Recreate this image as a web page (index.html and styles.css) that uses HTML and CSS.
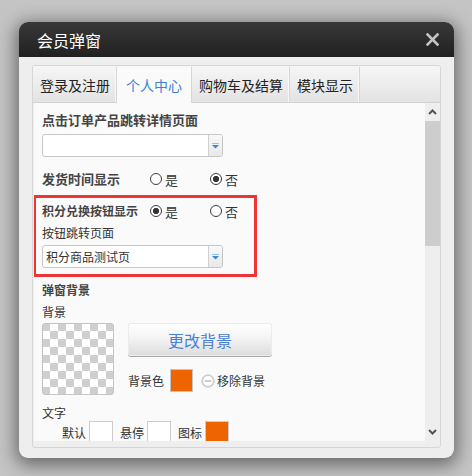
FILE: index.html
```html
<!DOCTYPE html>
<html lang="zh-CN">
<head>
<meta charset="utf-8">
<title>会员弹窗</title>
<link rel="stylesheet" href="styles.css">
</head>
<body>
<div class="dialog">
  <div class="dialog-head">
    <span class="dialog-title">会员弹窗</span>
    <span class="dialog-close">
      <svg width="13" height="13" viewBox="0 0 13 13"><path d="M1.5 1.5 L11.5 11.5 M11.5 1.5 L1.5 11.5" stroke="#c4c4c4" stroke-width="2.6" stroke-linecap="square"/></svg>
    </span>
  </div>
  <div class="dialog-body">
    <div class="tabs">
      <div class="tab-bar">
        <div class="tab">登录及注册</div>
        <div class="tab active">个人中心</div>
        <div class="tab">购物车及结算</div>
        <div class="tab">模块显示</div>
      </div>
      <div class="tab-panel">
        <div class="panel-scroll">
          <div class="label-strong">点击订单产品跳转详情页面</div>
          <div class="select">
            <span class="select-value"></span>
            <span class="select-arrow"><svg width="7" height="6" viewBox="0 0 7 6"><rect x="0" y="0" width="7" height="1" fill="#9cc0e6"/><path d="M0 2 H7 L3.5 5.5 Z" fill="#3f86d0"/></svg></span>
          </div>

          <div class="option-row">
            <span class="label-strong option-label">发货时间显示</span>
            <span class="radio"><i class="radio-dot"></i>是</span>
            <span class="radio"><i class="radio-dot checked"></i>否</span>
          </div>

          <div class="highlight">
            <div class="option-row first">
              <span class="label-strong option-label small">积分兑换按钮显示</span>
              <span class="radio"><i class="radio-dot checked"></i>是</span>
              <span class="radio"><i class="radio-dot"></i>否</span>
            </div>
            <div class="label tight">按钮跳转页面</div>
            <div class="select near">
              <span class="select-value">积分商品测试页</span>
              <span class="select-arrow"><svg width="7" height="6" viewBox="0 0 7 6"><rect x="0" y="0" width="7" height="1" fill="#9cc0e6"/><path d="M0 2 H7 L3.5 5.5 Z" fill="#3f86d0"/></svg></span>
            </div>
          </div>

          <div class="label-strong small section">弹窗背景</div>
          <div class="label tight">背景</div>
          <div class="bg-row">
            <div class="checker"></div>
            <div class="bg-controls">
              <button class="btn-change" type="button">更改背景</button>
              <div class="color-row">
                <span>背景色</span>
                <span class="swatch"></span>
                <span class="remove">
                  <svg width="14" height="14" viewBox="0 0 14 14"><circle cx="7" cy="7" r="5.8" fill="#fff" stroke="#cfcfcf" stroke-width="1.8"/><rect x="3.8" y="6" width="6.4" height="2" fill="#cfcfcf"/></svg>
                  <span>移除背景</span>
                </span>
              </div>
            </div>
          </div>

          <div class="label text-title">文字</div>
          <div class="text-row">
            <span>默认</span><span class="box"></span>
            <span>悬停</span><span class="box"></span>
            <span>图标</span><span class="box orange"></span>
          </div>
        </div>
        <div class="scrollbar">
          <div class="sb-btn"><svg width="9" height="6" viewBox="0 0 9 6"><path d="M1 5 L4.5 1.5 L8 5" fill="none" stroke="#555" stroke-width="2"/></svg></div>
          <div class="sb-track"><div class="sb-thumb"></div></div>
          <div class="sb-btn"><svg width="9" height="6" viewBox="0 0 9 6"><path d="M1 1 L4.5 4.5 L8 1" fill="none" stroke="#555" stroke-width="2"/></svg></div>
        </div>
      </div>
    </div>
  </div>
</div>
</body>
</html>
```

FILE: styles.css
```css
* { box-sizing: border-box; }

html, body { margin: 0; }

body {
  height: 476px;
  overflow: hidden;
  background: #c4c4c4;
  padding: 22px 0 0 19px;
  font-family: "Noto Sans CJK SC", "Noto Sans", sans-serif;
  color: #333;
}

/* dialog frame */
.dialog {
  width: 435px;
  height: 436px;
  border-radius: 9px;
  background: #eeeeee;
  box-shadow: 0 4px 18px 3px rgba(0, 0, 0, 0.48);
  display: flex;
  flex-direction: column;
  overflow: hidden;
}

.dialog-head {
  flex: none;
  height: 35px;
  background: linear-gradient(#383838, #212121);
  display: flex;
  align-items: center;
  justify-content: space-between;
  padding: 0 15px 0 18px;
}

.dialog-title {
  color: #fff;
  font-size: 16px;
  line-height: 20px;
}

.dialog-close svg { display: block; }

.dialog-body {
  flex: 1;
  display: flex;
  padding: 8px 13px 10px;
  min-height: 0;
}

/* tab box */
.tabs {
  flex: 1;
  display: flex;
  flex-direction: column;
  border: 1px solid #d6d6d6;
  border-radius: 3px;
  background: #eeeeee;
  min-height: 0;
}

.tab-bar {
  flex: none;
  display: flex;
  height: 37px;
  padding-top: 1px;
  border-bottom: 1px solid #d2d2d2;
  background: linear-gradient(#f6f6f6, #e3e3e3);
  border-radius: 2px 2px 0 0;
}

.tab {
  padding: 1px 6px 0 7px;
  line-height: 34px;
  font-size: 14px;
  color: #222;
  border-right: 1px solid #d6d6d6;
  box-shadow: inset -1px 0 0 #f8f8f8;
}

.tab.active {
  padding: 1px 9px 0 9px;
  background: #fafafa;
  color: #3f7fd3;
  margin-bottom: -1px;
  box-shadow: none;
}

.tab-panel {
  flex: 1;
  display: flex;
  margin: 0 0 6px 1px;
  min-height: 0;
}

.panel-scroll {
  flex: 1;
  background: #fafafa;
  padding: 7px 8px 0;
  overflow: hidden;
}

/* scrollbar */
.scrollbar {
  width: 15px;
  display: flex;
  flex-direction: column;
  background: #eeeeee;
}

.sb-btn {
  height: 18px;
  display: flex;
  align-items: center;
  justify-content: center;
}

.sb-btn svg { display: block; }

.sb-track { flex: 1; }

.sb-thumb {
  height: 125px;
  background: #cdcdcd;
}

/* form parts */
.label-strong {
  font-weight: bold;
  font-size: 13px;
  line-height: 20px;
  color: #444;
}

.label-strong.small { font-size: 12px; }

.label {
  font-size: 12px;
  line-height: 20px;
  color: #333;
}

.label.tight { margin-top: 2px; }

.section { margin-top: 3px; }

.select {
  width: 181px;
  height: 23px;
  margin-top: 4px;
  border: 1px solid #c6c6c6;
  border-radius: 3px;
  background: #fff;
  display: flex;
}

.select.near { margin-top: 2px; }

.select-value {
  flex: 1;
  padding-left: 3px;
  font-size: 12px;
  line-height: 21px;
  color: #333;
}

.select-arrow {
  width: 14px;
  border-left: 1px solid #d0d0d0;
  border-radius: 0 2px 2px 0;
  background: linear-gradient(#f9f9f9, #e8e8e8);
  display: flex;
  align-items: center;
  justify-content: center;
}

.select-arrow svg { display: block; }

.option-row {
  display: flex;
  align-items: center;
  height: 20px;
  margin-top: 12px;
}

.option-row.first { margin-top: 0; }

.option-row > * { flex: none; }

.option-label { width: 108px; }

.radio {
  width: 60px;
  display: flex;
  align-items: center;
  font-size: 13px;
  color: #333;
}

.radio-dot {
  flex: none;
  width: 12px;
  height: 12px;
  margin-right: 3px;
  border: 1px solid #3c3c3c;
  border-radius: 50%;
  background: #fff;
}

.radio-dot.checked {
  background: radial-gradient(circle, #333 0 2.8px, #fff 3.4px);
}

.highlight {
  width: 224px;
  margin: 6px 0 0 -9px;
  padding: 3px 0 6px 6px;
  border: 3px solid #ee3535;
}

/* background block */
.bg-row {
  display: flex;
  gap: 14px;
  margin-top: 1px;
}

.checker {
  flex: none;
  width: 72px;
  height: 72px;
  border: 1px solid #c4c4c4;
  border-radius: 3px;
  background: repeating-conic-gradient(#fff 0 25%, #cfcfcf 0 50%) -1px -1px / 16px 16px;
}

.bg-controls {
  display: flex;
  flex-direction: column;
}

.btn-change {
  width: 144px;
  height: 34px;
  padding: 0;
  border: none;
  border-radius: 3px;
  border-bottom: 1px solid #a8a8a8;
  background: linear-gradient(#ffffff, #f4f4f4 45%, #dcdcdc);
  box-shadow: inset 0 0 0 1px #ececec;
  color: #4a80d6;
  font-family: inherit;
  font-size: 16px;
  line-height: 20px;
}

.color-row {
  display: flex;
  align-items: center;
  margin-top: 12px;
  font-size: 12px;
  line-height: 20px;
  color: #333;
}

.swatch {
  width: 23px;
  height: 23px;
  margin-left: 6px;
  border: 1px solid #c4c4c4;
  background: #ee6400;
}

.remove {
  display: flex;
  align-items: center;
  gap: 2px;
  margin-left: 8px;
}

.remove svg { display: block; }

.text-title {
  margin-top: 10px;
  line-height: 16px;
}

.text-row {
  display: flex;
  align-items: center;
  padding-left: 20px;
  font-size: 12px;
  line-height: 20px;
  color: #333;
}

.box {
  width: 24px;
  height: 24px;
  margin: 0 7px 0 3px;
  border: 1px solid #cdcdcd;
  background: #fff;
}

.box.orange { background: #ee6400; }
```
